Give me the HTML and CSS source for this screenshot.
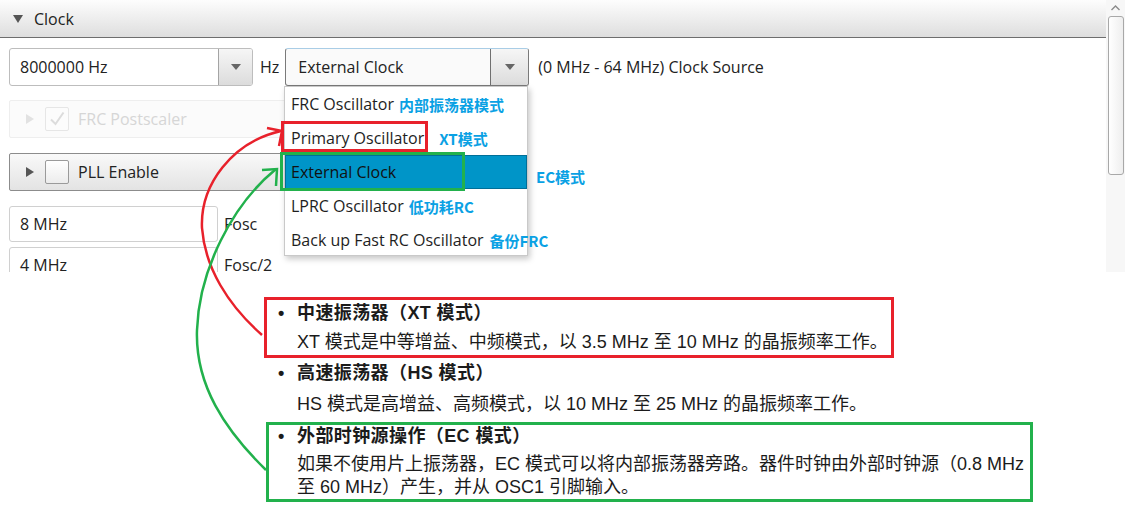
FILE: index.html
```html
<!DOCTYPE html>
<html>
<head>
<meta charset="utf-8">
<link rel="stylesheet" href="styles.css">
</head>
<body>
<div class="app">
  <div class="main">
    <div class="header"><span class="htri"></span><span class="htitle">Clock</span></div>
    <div class="content">
      <div class="row row1">
        <div class="combo combo1"><div class="cfield">8000000 Hz</div><div class="cbtn"><span class="caret"></span></div></div>
        <span class="unit">Hz</span>
        <div class="combo combo2"><div class="cfield">External Clock</div><div class="cbtn"><span class="caret"></span></div></div>
        <span class="range">(0 MHz - 64 MHz) Clock Source</span>
      </div>
      <div class="exp exp-disabled">
        <span class="etri"></span>
        <span class="chk"><svg width="22" height="22" viewBox="0 0 22 22"><path d="M5 11.5 L9.5 16 L17.5 4.5" fill="none" stroke="#dcdcdc" stroke-width="2"/></svg></span>
        <span class="elabel">FRC Postscaler</span>
      </div>
      <div class="exp exp-pll">
        <span class="etri"></span>
        <span class="chk"></span>
        <span class="elabel">PLL Enable</span>
      </div>
      <div class="row row-tf"><div class="tf">8 MHz</div><span class="tflabel">Fosc</span></div>
      <div class="row row-tf row-tf2"><div class="tf">4 MHz</div><span class="tflabel">Fosc/2</span></div>
    </div>
  </div>
  <div class="scrollbar">
    <svg class="sb-up" width="19" height="16" viewBox="0 0 19 16"><path d="M5.5 10 L9.5 6 L13.5 10" fill="none" stroke="#8a8a8a" stroke-width="1.4"/></svg>
    <div class="thumb"></div>
  </div>
  <div class="popup">
    <div class="pitem">FRC Oscillator<span class="note note-frc">内部振荡器模式</span></div>
    <div class="pitem">Primary Oscillator<span class="note note-xt">XT模式</span></div>
    <div class="pitem pitem-sel">External Clock<span class="note note-ec">EC模式</span></div>
    <div class="pitem">LPRC Oscillator<span class="note note-lp">低功耗RC</span></div>
    <div class="pitem">Back up Fast RC Oscillator<span class="note note-bk">备份FRC</span></div>
  </div>
  <div class="mark mark-red"></div>
  <div class="mark mark-green"></div>
</div>

<div class="doc">
  <div class="item item-red">
    <div class="ititle"><span class="bul">•</span>中速振荡器（XT 模式）</div>
    <div class="idesc">XT 模式是中等增益、中频模式，以 3.5 MHz 至 10 MHz 的晶振频率工作。</div>
  </div>
  <div class="item item-plain">
    <div class="ititle"><span class="bul">•</span>高速振荡器（HS 模式）</div>
    <div class="idesc">HS 模式是高增益、高频模式，以 10 MHz 至 25 MHz 的晶振频率工作。</div>
  </div>
  <div class="item item-green">
    <div class="ititle"><span class="bul">•</span>外部时钟源操作（EC 模式）</div>
    <div class="idesc">如果不使用片上振荡器，EC 模式可以将内部振荡器旁路。器件时钟由外部时钟源（0.8 MHz<br>至 60 MHz）产生，并从 OSC1 引脚输入。</div>
  </div>
</div>

<svg class="arrows" width="1132" height="510" viewBox="0 0 1132 510">
  <path d="M262 335 C 228 305, 205 268, 202 228 C 200 185, 232 142, 281 131" fill="none" stroke="#e8212b" stroke-width="2.5"/>
  <path d="M267 128 L282 131 L279 146" fill="none" stroke="#e8212b" stroke-width="2.5"/>
  <path d="M266 470 C 225 430, 195 385, 197 330 C 199 270, 232 205, 276 169" fill="none" stroke="#22b14c" stroke-width="2.5"/>
  <path d="M262 170 L277 169 L276 186" fill="none" stroke="#22b14c" stroke-width="2.5"/>
</svg>
</body>
</html>
```

FILE: styles.css
```css
* { box-sizing: border-box; }
html, body { margin: 0; padding: 0; background: #fff; }
body {
  width: 1132px;
  height: 510px;
  overflow: hidden;
  position: relative;
  font-family: "Open Sans", "Noto Sans", sans-serif;
  font-size: 16px;
  color: #222;
}

.app {
  position: relative;
  height: 272px;
  overflow: hidden;
  display: flex;
}
.main { width: 1106px; flex: 0 0 1106px; }

.header {
  height: 38px;
  background: linear-gradient(#fdfdfd, #dedede);
  border-bottom: 1px solid #6e6e6e;
  display: flex;
  align-items: center;
  padding-left: 13px;
}
.htri {
  width: 0; height: 0;
  border-left: 5px solid transparent;
  border-right: 5px solid transparent;
  border-top: 8px solid #555;
  margin-right: 11px;
}
.htitle { font-size: 16px; color: #222; }

.content {
  padding: 10px 0 0 9px;
  display: flex;
  flex-direction: column;
}
.row { display: flex; align-items: center; }
.row1 { height: 38px; }

.combo {
  display: flex;
  height: 38px;
  border: 1px solid #bdbdbd;
  border-radius: 3px;
  background: #fff;
}
.combo1 { width: 244px; }
.combo2 {
  width: 244px;
  border-color: #a9cde6 #7a7a7a #7a7a7a #7a7a7a;
  background: #fafafa;
}
.cfield {
  flex: 1;
  display: flex;
  align-items: center;
  padding-left: 10px;
}
.combo2 .cfield { padding-left: 12px; }
.cbtn {
  width: 34px;
  border-left: 1px solid #a4a4a4;
  background: linear-gradient(#f6f6f6, #dcdcdc);
  display: flex;
  align-items: center;
  justify-content: center;
  border-radius: 0 2px 2px 0;
}
.combo2 .cbtn { width: 38px; border-left-color: #707070; }
.caret {
  width: 0; height: 0;
  border-left: 5px solid transparent;
  border-right: 5px solid transparent;
  border-top: 6px solid #666;
}
.unit { margin: 0 6px 0 7px; }
.range { margin-left: 9px; }

.exp {
  width: 300px;
  height: 38px;
  display: flex;
  align-items: center;
  border-radius: 2px;
}
.exp-disabled {
  margin-top: 14px;
  border: 1px solid #eeeeee;
  background: #fbfbfb;
  color: #d6d6d6;
}
.exp-pll {
  margin-top: 15px;
  border: 1px solid #8c8c8c;
  background: linear-gradient(#f9f9f9, #e3e3e3);
}
.etri {
  width: 0; height: 0;
  border-top: 5px solid transparent;
  border-bottom: 5px solid transparent;
  border-left: 8px solid #555;
  margin-left: 16px;
}
.exp-disabled .etri { border-left-color: #e2e2e2; }
.chk {
  width: 24px;
  height: 24px;
  margin-left: 11px;
  border: 1px solid #9a9a9a;
  border-radius: 2px;
  background: linear-gradient(#ffffff, #ececec);
  display: flex;
  align-items: center;
  justify-content: center;
}
.exp-disabled .chk { border-color: #e6e6e6; background: #fcfcfc; }
.elabel { margin-left: 9px; }

.row-tf { margin-top: 15px; }
.row-tf2 { margin-top: 5px; }
.tf {
  width: 209px;
  height: 36px;
  border: 1px solid #d0d0d0;
  border-radius: 3px;
  display: flex;
  align-items: center;
  padding-left: 10px;
}
.tflabel { margin-left: 6px; }

.scrollbar {
  width: 19px;
  flex: 0 0 19px;
  background: #f7f7f7;
  display: flex;
  flex-direction: column;
}
.sb-up { display: block; }
.thumb {
  margin: 0 1px 0 2px;
  height: 159px;
  border: 1px solid #a8a8a8;
  border-radius: 3px;
  background: linear-gradient(to right, #ffffff, #eeeeee);
}

.popup {
  position: absolute;
  left: 284px;
  top: 86px;
  width: 244px;
  height: 170px;
  background: #fff;
  border: 1px solid #c9c9c9;
  box-shadow: 2px 3px 6px rgba(0,0,0,0.22);
}
.pitem {
  height: 34px;
  display: flex;
  align-items: center;
  padding-left: 6px;
  white-space: nowrap;
  color: #1e1e1e;
}
.pitem-sel {
  position: relative;
  background: #0095c8;
  border: 1px solid #006f98;
  color: #111;
  padding-left: 5px;
}
.note {
  font-family: "Noto Sans CJK SC", "Noto Sans", sans-serif;
  font-weight: 700;
  font-size: 15px;
  color: #0aa1e4;
}
.note-frc { margin-left: 5px; }
.note-xt { margin-left: 15px; }
.note-ec { position: absolute; left: 250px; top: 10px; }
.note-lp { margin-left: 5px; }
.note-bk { margin-left: 6px; }

.mark { position: absolute; }
.mark-red {
  left: 281px; top: 121px; width: 147px; height: 31px;
  border: 3px solid #e8212b;
}
.mark-green {
  left: 280px; top: 152px; width: 185px; height: 39px;
  border: 3px solid #22b14c;
}

.doc {
  padding-left: 264px;
  padding-top: 25px;
  font-family: "Liberation Sans", "Noto Sans CJK SC", sans-serif;
  font-size: 18px;
  color: #1b1b1b;
}
.item { white-space: nowrap; }
.ititle { font-weight: 700; line-height: 24px; display: flex; letter-spacing: 0.4px; }
.bul { width: 19px; font-weight: 700; }
.idesc { padding-left: 19px; line-height: 24px; }
.item-red {
  width: 630px;
  border: 3px solid #e8212b;
  padding: 1px 0 1px 11px;
}
.item-red .idesc { margin-top: 5px; }
.item-plain {
  padding: 3px 0 0 14px;
}
.item-plain .idesc { margin-top: 7px; }
.item-green {
  margin-left: 2px;
  margin-top: 6px;
  width: 767px;
  border: 3px solid #22b14c;
  padding: 0 0 0 9px;
}
.item-green .ititle { line-height: 22px; }
.item-green .idesc { margin-top: 6px; line-height: 23px; }

.arrows {
  position: absolute;
  left: 0;
  top: 0;
  pointer-events: none;
}
```
